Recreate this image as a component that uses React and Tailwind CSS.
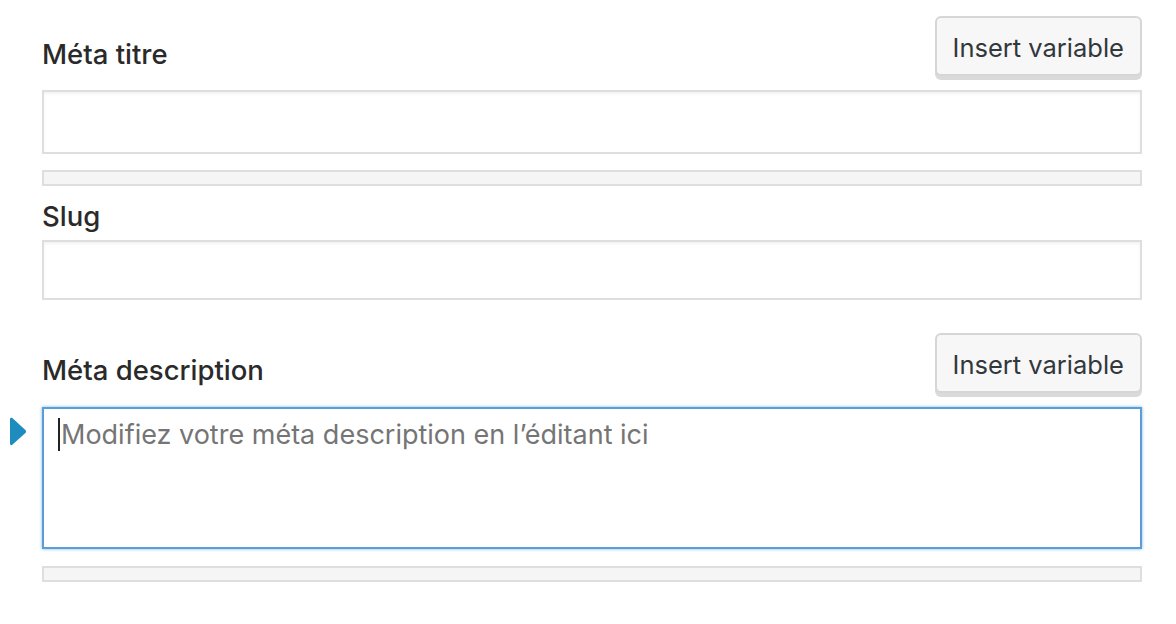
import { useState } from "react";

const font = { fontFamily: "Inter, 'Noto Sans', sans-serif" };

const InsertButton = () => (
  <button
    type="button"
    className="h-[60px] px-[16px] pt-[3px] rounded-[6px] border-2 border-[#d6d6d6] bg-[#f7f7f7] text-[25.5px] text-[#32373c] shadow-[0_4px_0_#dadada] leading-none"
  >
    Insert variable
  </button>
);

const ProgressBar = () => (
  <div className="h-[16px] border-2 border-[#dedede] bg-[#f5f5f5]" />
);

const Label = ({ children, className = "" }) => (
  <label className={`block text-[27.5px] leading-[32px] font-medium text-[#2a2a2a] ${className}`}>
    {children}
  </label>
);

export default function App() {
  const [title] = useState("");

  return (
    <div className="bg-white w-[1176px] h-[624px] pt-[16px] pl-[9px] pr-[34px]" style={font}>
      {/* Méta titre */}
      <div className="pl-[33px]">
        <div className="flex justify-between items-start h-[64px]">
          <Label className="mt-[22px]">Méta titre</Label>
          <InsertButton />
        </div>
        <div className="mt-[10px] h-[64px] border-2 border-[#dedede] bg-white shadow-[inset_0_2px_3px_rgba(0,0,0,0.05)]">
          {title}
        </div>
        <div className="mt-[16px]">
          <ProgressBar />
        </div>

        {/* Slug */}
        <Label className="mt-[14px]">Slug</Label>
        <div className="mt-[8px] h-[60px] border-2 border-[#dedede] bg-white shadow-[inset_0_2px_3px_rgba(0,0,0,0.05)]" />

        {/* Méta description */}
        <div className="mt-[33px] flex justify-between items-start h-[64px]">
          <Label className="mt-[21px]">Méta description</Label>
          <InsertButton />
        </div>
      </div>

      <div className="flex mt-[10px]">
        <div className="w-[33px] shrink-0 pt-[10px]">
          <svg width="18" height="29" viewBox="0 0 18 29">
            <path
              d="M1 2.2 C1 0.8 2.3 0.3 3.3 1.1 L16.4 12.9 C17.3 13.7 17.3 15.2 16.4 16 L3.3 27.8 C2.3 28.7 1 28.2 1 26.8 Z"
              fill="#1e8cbe"
            />
          </svg>
        </div>
        <div className="flex-1 h-[142px] border-2 border-[#5b9dd9] shadow-[0_0_3px_rgba(30,140,190,0.6)] pl-[14px] pt-[9px]">
          <div className="flex items-start">
            <span className="inline-block w-[2px] h-[33px] bg-[#222] mr-[1px]" />
            <span className="text-[27px] leading-[33px] text-[#757575]">
              Modifiez votre méta description en l’éditant ici
            </span>
          </div>
        </div>
      </div>

      <div className="pl-[33px] mt-[17px]">
        <ProgressBar />
      </div>
    </div>
  );
}
